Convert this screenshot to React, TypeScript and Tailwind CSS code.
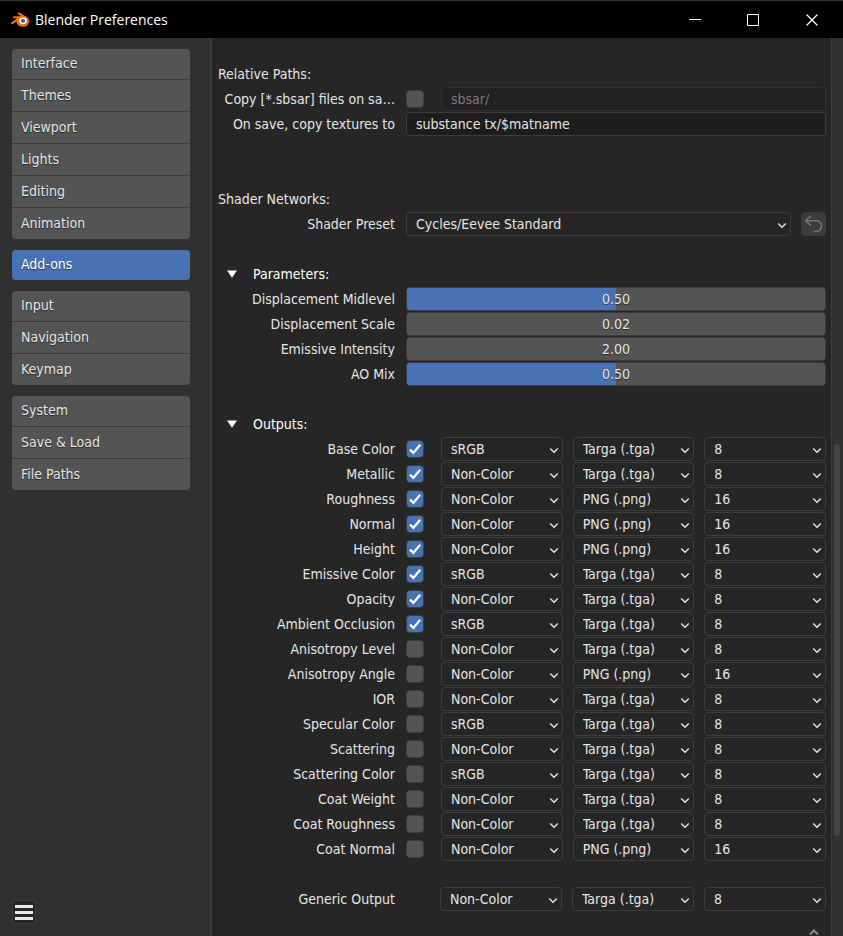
import { useState } from "react";

const NAV_GROUPS = [
  ["Interface", "Themes", "Viewport", "Lights", "Editing", "Animation"],
  ["Add-ons"],
  ["Input", "Navigation", "Keymap"],
  ["System", "Save & Load", "File Paths"],
];

const COLOR_SPACES = ["sRGB", "Non-Color"];
const FORMATS = ["Targa (.tga)", "PNG (.png)"];
const BIT_DEPTHS = ["8", "16"];

type Output = {
  name: string;
  enabled: boolean;
  space: string;
  format: string;
  depth: string;
};

const OUTPUTS: Output[] = [
  { name: "Base Color", enabled: true, space: "sRGB", format: "Targa (.tga)", depth: "8" },
  { name: "Metallic", enabled: true, space: "Non-Color", format: "Targa (.tga)", depth: "8" },
  { name: "Roughness", enabled: true, space: "Non-Color", format: "PNG (.png)", depth: "16" },
  { name: "Normal", enabled: true, space: "Non-Color", format: "PNG (.png)", depth: "16" },
  { name: "Height", enabled: true, space: "Non-Color", format: "PNG (.png)", depth: "16" },
  { name: "Emissive Color", enabled: true, space: "sRGB", format: "Targa (.tga)", depth: "8" },
  { name: "Opacity", enabled: true, space: "Non-Color", format: "Targa (.tga)", depth: "8" },
  { name: "Ambient Occlusion", enabled: true, space: "sRGB", format: "Targa (.tga)", depth: "8" },
  { name: "Anisotropy Level", enabled: false, space: "Non-Color", format: "Targa (.tga)", depth: "8" },
  { name: "Anisotropy Angle", enabled: false, space: "Non-Color", format: "PNG (.png)", depth: "16" },
  { name: "IOR", enabled: false, space: "Non-Color", format: "Targa (.tga)", depth: "8" },
  { name: "Specular Color", enabled: false, space: "sRGB", format: "Targa (.tga)", depth: "8" },
  { name: "Scattering", enabled: false, space: "Non-Color", format: "Targa (.tga)", depth: "8" },
  { name: "Scattering Color", enabled: false, space: "sRGB", format: "Targa (.tga)", depth: "8" },
  { name: "Coat Weight", enabled: false, space: "Non-Color", format: "Targa (.tga)", depth: "8" },
  { name: "Coat Roughness", enabled: false, space: "Non-Color", format: "Targa (.tga)", depth: "8" },
  { name: "Coat Normal", enabled: false, space: "Non-Color", format: "PNG (.png)", depth: "16" },
];

function BlenderLogo() {
  return (
    <svg width="19" height="16" viewBox="0 0 19 16" aria-hidden="true">
      <g stroke="#ea7600" strokeLinecap="round">
        <path d="M8 1.4 L15.4 6.4" strokeWidth="2.2" />
        <path d="M2.8 5.2 H10.5" strokeWidth="2" />
        <path d="M1.2 11.2 L8.8 5.6" strokeWidth="2.2" />
      </g>
      <ellipse cx="11.8" cy="9.2" rx="6.4" ry="5.6" fill="#ea7600" />
      <ellipse cx="12" cy="8.8" rx="3.8" ry="3.4" fill="#fff" />
      <ellipse cx="12" cy="8.8" rx="2.1" ry="1.9" fill="#265787" />
    </svg>
  );
}

function Select({ label, options, value }: { label: string; options: string[]; value: string }) {
  return (
    <div className="relative">
      <select
        aria-label={label}
        defaultValue={value}
        className="block h-6 w-full appearance-none rounded-sm border border-[#3d3d3d] bg-[#262626] pr-5 pl-[9px] text-[#e5e5e5]"
      >
        {options.map((option) => (
          <option key={option}>{option}</option>
        ))}
      </select>
      <svg
        className="pointer-events-none absolute top-2 right-1 h-2.5 w-2.5"
        viewBox="0 0 10 10"
        fill="none"
        stroke="#e5e5e5"
        strokeWidth="1.4"
      >
        <path d="M1.2 3.5 L5 7.3 L8.8 3.5" />
      </svg>
    </div>
  );
}

function Checkbox({ id, checked }: { id: string; checked: boolean }) {
  return (
    <div className="relative h-[18px] w-[18px]">
      <input
        id={id}
        type="checkbox"
        defaultChecked={checked}
        className="peer block h-[18px] w-[18px] appearance-none rounded-sm border border-[#3d3d3d] bg-[#545454] checked:bg-[#4772b3]"
      />
      <svg
        className="pointer-events-none absolute inset-0 hidden h-[18px] w-[18px] peer-checked:block"
        viewBox="0 0 18 18"
        fill="none"
        stroke="#fff"
        strokeWidth="2.2"
      >
        <path d="M4 9.6 L7.4 12.8 L14.2 4.8" />
      </svg>
    </div>
  );
}

function Row({ label, htmlFor, children }: { label: string; htmlFor?: string; children: React.ReactNode }) {
  return (
    <div className="grid h-[25px] grid-cols-[177px_1fr] items-center gap-[11px]">
      <label htmlFor={htmlFor} className="text-right whitespace-nowrap">
        {label}
      </label>
      {children}
    </div>
  );
}

function Slider({ id, label, initial }: { id: string; label: string; initial: number }) {
  const [value, setValue] = useState(initial);
  return (
    <Row label={label} htmlFor={id}>
      <div className="relative h-6 overflow-hidden rounded-sm border border-[#3d3d3d] bg-[#545454]">
        <div className="h-full bg-[#4772b3]" style={{ width: `${value * 100}%` }} />
        <input
          id={id}
          type="range"
          min="0"
          max="1"
          step="0.01"
          value={value}
          onChange={(e) => setValue(Number(e.target.value))}
          className="absolute inset-0 w-full opacity-0"
        />
        <span className="pointer-events-none absolute inset-0 text-center leading-[22px] text-shadow-[0_1px_1px_#0008]">
          {value.toFixed(2)}
        </span>
      </div>
    </Row>
  );
}

function NumberField({ id, label, value }: { id: string; label: string; value: string }) {
  return (
    <Row label={label} htmlFor={id}>
      <input
        id={id}
        type="text"
        defaultValue={value}
        className="h-6 w-full rounded-sm border border-[#3d3d3d] bg-[#545454] text-center text-shadow-[0_1px_1px_#0008]"
      />
    </Row>
  );
}

function PanelHeader({ title }: { title: string }) {
  return (
    <button type="button" className="flex h-[25px] items-center gap-[15px] pl-2 text-white">
      <svg width="12" height="8" viewBox="0 0 12 8" fill="#fff">
        <path d="M1 0.5 H11 L6 7.8 Z" />
      </svg>
      {title}
    </button>
  );
}

function OutputSelects({ name, space, format, depth }: { name: string; space: string; format: string; depth: string }) {
  return (
    <div className="grid flex-1 grid-cols-3 gap-2.5">
      <Select label={`${name} color space`} options={COLOR_SPACES} value={space} />
      <Select label={`${name} format`} options={FORMATS} value={format} />
      <Select label={`${name} bit depth`} options={BIT_DEPTHS} value={depth} />
    </div>
  );
}

function TitleBar() {
  return (
    <header className="flex h-[38px] items-center border-t border-[#333] bg-black pl-[11px] text-white">
      <BlenderLogo />
      <h1 className="ml-[5px] flex-1 font-['Open_Sans',sans-serif] text-sm">Blender Preferences</h1>
      <button type="button" aria-label="Minimize" className="flex h-full w-[58px] items-center justify-center">
        <svg width="12" height="12" viewBox="0 0 12 12" stroke="#fff">
          <path d="M0 5.5 H12" />
        </svg>
      </button>
      <button type="button" aria-label="Maximize" className="flex h-full w-[58px] items-center justify-center">
        <svg width="12" height="12" viewBox="0 0 12 12" fill="none" stroke="#fff">
          <path d="M0.5 0.5 H11.5 V11.5 H0.5 Z" />
        </svg>
      </button>
      <button type="button" aria-label="Close" className="mr-px flex h-full w-[60px] items-center justify-center">
        <svg width="12" height="12" viewBox="0 0 12 12" stroke="#fff" strokeWidth="1.2">
          <path d="M0.5 0.5 L11.5 11.5 M11.5 0.5 L0.5 11.5" />
        </svg>
      </button>
    </header>
  );
}

function Sidebar() {
  return (
    <aside className="flex w-[212px] shrink-0 flex-col justify-between border-r-2 border-[#3a3a3a] bg-[#303030] px-3 pt-[11px] pb-3">
      <nav className="mr-2 flex flex-col gap-[11px]">
        {NAV_GROUPS.map((group) => (
          <div key={group[0]} className="flex flex-col gap-px overflow-hidden rounded-sm bg-[#3d3d3d]">
            {group.map((item) => (
              <button
                key={item}
                type="button"
                className={
                  item === "Add-ons"
                    ? "h-[30px] bg-[#4772b3] px-[9px] pb-0.5 text-left text-white text-shadow-[0_1px_1px_#0008]"
                    : "h-[31px] bg-[#545454] px-[9px] pb-0.5 text-left text-shadow-[0_1px_1px_#0008] first:h-[30px]"
                }
              >
                {item}
              </button>
            ))}
          </div>
        ))}
      </nav>
      <button
        type="button"
        aria-label="Menu"
        className="flex h-6 w-6 items-center justify-center rounded-sm border border-[#3d3d3d] bg-[#262626]"
      >
        <svg width="18" height="16" viewBox="0 0 18 16" fill="#e8e8e8">
          <path d="M0 1 H18 V4 H0 Z M0 7 H18 V10 H0 Z M0 13 H18 V16 H0 Z" />
        </svg>
      </button>
    </aside>
  );
}

export default function App() {
  return (
    <div className="flex min-h-screen flex-col bg-[#262626] font-['DejaVu_Sans_Condensed','DejaVu_Sans',sans-serif] text-sm text-[#e5e5e5]">
      <TitleBar />
      <div className="flex flex-1">
        <Sidebar />

        <main className="relative flex-1 bg-[#262626] pt-[23px] pr-[5px] pl-1.5">
          {/* Relative paths */}
          <section className="mb-[50px]">
            <h2 className="h-[25px] leading-[27px]">Relative Paths:</h2>
            <Row label="Copy [*.sbsar] files on sa…" htmlFor="copy-sbsar">
              <div className="flex items-center gap-[17px]">
                <Checkbox id="copy-sbsar" checked={false} />
                <input
                  type="text"
                  aria-label="Archive folder"
                  disabled
                  defaultValue="sbsar/"
                  className="h-6 min-w-0 flex-1 rounded-sm border border-[#303030] bg-[#222] px-[9px] text-[#7a7a7a]"
                />
              </div>
            </Row>
            <Row label="On save, copy textures to" htmlFor="texture-path">
              <input
                id="texture-path"
                type="text"
                defaultValue="substance tx/$matname"
                className="h-6 w-full rounded-sm border border-[#3d3d3d] bg-[#1d1d1d] px-[9px]"
              />
            </Row>
          </section>

          {/* Shader networks */}
          <section className="mb-[25px]">
            <h2 className="h-[25px] leading-[27px]">Shader Networks:</h2>
            <Row label="Shader Preset">
              <div className="flex gap-2.5">
                <div className="flex-1">
                  <Select label="Shader Preset" options={["Cycles/Eevee Standard"]} value="Cycles/Eevee Standard" />
                </div>
                <button
                  type="button"
                  aria-label="Reset"
                  className="flex h-6 w-[25px] items-center justify-center rounded-sm border border-[#3a3a3a] bg-[#3d3d3d]"
                >
                  <svg width="19" height="18" viewBox="0 0 19 18" fill="none" stroke="#787878" strokeWidth="1.4">
                    <path d="M7 1 L1.5 5.7 L7 10.4 M1.5 5.7 H12.2 A5.4 5.4 0 0 1 12.2 16.5 H9.5" />
                  </svg>
                </button>
              </div>
            </Row>
          </section>

          {/* Parameters */}
          <section className="mb-[25px]">
            <PanelHeader title="Parameters:" />
            <Slider id="midlevel" label="Displacement Midlevel" initial={0.5} />
            <NumberField id="scale" label="Displacement Scale" value="0.02" />
            <NumberField id="emissive" label="Emissive Intensity" value="2.00" />
            <Slider id="ao-mix" label="AO Mix" initial={0.5} />
          </section>

          {/* Outputs */}
          <section>
            <PanelHeader title="Outputs:" />
            {OUTPUTS.map((output) => (
              <Row key={output.name} label={output.name} htmlFor={output.name}>
                <div className="flex items-center gap-[17px]">
                  <Checkbox id={output.name} checked={output.enabled} />
                  <OutputSelects
                    name={output.name}
                    space={output.space}
                    format={output.format}
                    depth={output.depth}
                  />
                </div>
              </Row>
            ))}
            <div className="mt-[25px]">
              <Row label="Generic Output">
                <div className="flex pl-[34px]">
                  <OutputSelects name="Generic Output" space="Non-Color" format="Targa (.tga)" depth="8" />
                </div>
              </Row>
            </div>
          </section>

          <svg
            className="absolute right-[11px] bottom-0 h-2 w-3"
            viewBox="0 0 12 8"
            fill="none"
            stroke="#8a8a8a"
            strokeWidth="2"
          >
            <path d="M2 6.5 L6 2.5 L10 6.5" />
          </svg>
        </main>

        {/* Scrollbar */}
        <div className="flex w-3 shrink-0 flex-col border-l border-[#3d3d3d] bg-[#303030] pt-[406px] pl-0.5">
          <div className="h-[392px] w-1.5 rounded-full bg-[#444]" />
        </div>
      </div>
    </div>
  );
}
